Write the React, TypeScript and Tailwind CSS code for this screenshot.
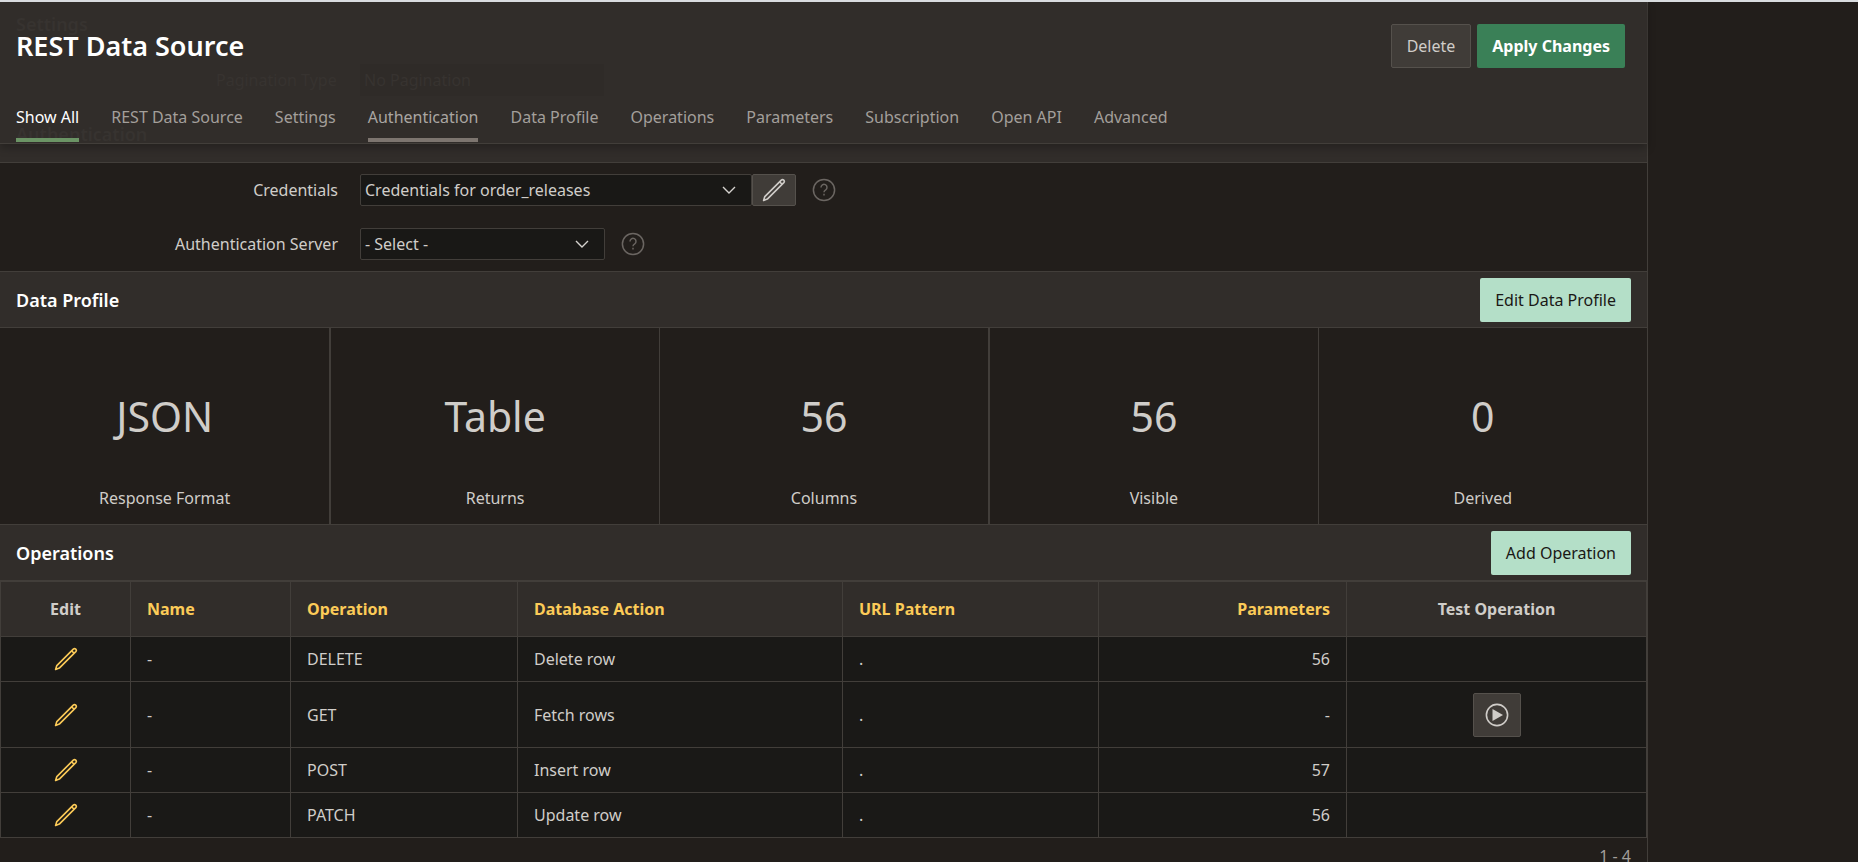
import React from "react";

const tabs = [
  "Show All",
  "REST Data Source",
  "Settings",
  "Authentication",
  "Data Profile",
  "Operations",
  "Parameters",
  "Subscription",
  "Open API",
  "Advanced",
];

const stats = [
  { value: "JSON", label: "Response Format" },
  { value: "Table", label: "Returns" },
  { value: "56", label: "Columns" },
  { value: "56", label: "Visible" },
  { value: "0", label: "Derived" },
];

const operations = [
  { operation: "DELETE", action: "Delete row", params: "56", test: false },
  { operation: "GET", action: "Fetch rows", params: "-", test: true },
  { operation: "POST", action: "Insert row", params: "57", test: false },
  { operation: "PATCH", action: "Update row", params: "56", test: false },
];

function Pencil() {
  return (
    <svg viewBox="0 0 24 24" className="size-6" fill="none" stroke="currentColor" strokeWidth="1.6" strokeLinejoin="round" aria-hidden="true">
      <path d="M1.6 22.4 2.8 18.6 19.3 2.1a1.77 1.77 0 0 1 2.5 2.5L5.3 21.1Z" />
      <path d="m17.6 3.8 2.5 2.5" />
    </svg>
  );
}

function Chevron() {
  return (
    <svg viewBox="0 0 14 8" className="pointer-events-none absolute top-1/2 right-4 h-2 w-3.5 -translate-y-1/2 text-[#d5d2ce]" fill="none" stroke="currentColor" strokeWidth="1.4" aria-hidden="true">
      <path d="m1 1 6 6 6-6" />
    </svg>
  );
}

function Help({ label }: { label: string }) {
  return (
    <button type="button" aria-label={label} className="ml-4 text-[#6b6662]">
      <svg viewBox="0 0 24 24" className="size-6" fill="none" stroke="currentColor" strokeWidth="1.5" aria-hidden="true">
        <circle cx="12" cy="12" r="10.6" />
        <path d="M9 9.4a3 3 0 1 1 4.7 2.4c-1.1.7-1.7 1.2-1.7 2.4" />
        <path d="M12 15.8v1.8" />
      </svg>
    </button>
  );
}

function SectionHeader({ title, action }: { title: string; action: string }) {
  return (
    <div className="flex h-14 items-center justify-between border-b border-[#423e3a] bg-[#312d2a] px-4">
      <h2 className="text-lg font-semibold text-white">{title}</h2>
      <button type="button" className="h-11 rounded-xs bg-[#b4dfc8] px-[15px] text-[#1a1816]">{action}</button>
    </div>
  );
}

export default function App() {
  return (
    <div className="flex h-screen overflow-hidden border-t-2 border-[#d9dcdf] bg-[#221e1b] font-['Noto_Sans',sans-serif] text-base leading-6 text-[#d0cdc9]">
      <main className="flex min-w-0 flex-1 flex-col border-r border-[#423e3a]">
        <header className="relative z-10 shrink-0 border-b border-[#423e3a] bg-[#312d2a] shadow-[0_4px_8px_rgba(0,0,0,0.25)]">
          <div aria-hidden="true" className="absolute inset-0 text-[#373330]">
            <span className="absolute top-3 left-4 text-lg leading-5 font-semibold">Settings</span>
            <span className="absolute top-16.5 left-54">Pagination Type</span>
            <span className="absolute top-15.5 left-90 h-8 w-61 bg-[#2f2b28] px-1 leading-8">No Pagination</span>
            <span className="absolute top-30.5 left-4 text-lg leading-5 font-semibold">Authentication</span>
          </div>
          <div className="relative flex items-start justify-between px-4 pt-5.5 pr-5.5">
            <h1 className="mt-2.5 text-[27px] leading-6 font-semibold text-white">REST Data Source</h1>
            <div className="flex gap-1.5">
              <button type="button" className="h-11 rounded-xs border border-[#55514c] bg-[#403c38] px-[15px]">Delete</button>
              <button type="button" className="h-11 rounded-xs bg-[#3a8057] px-[15px] font-bold text-white">Apply Changes</button>
            </div>
          </div>
          <nav className="relative mt-8.5 flex gap-8 px-4 pb-px">
            {tabs.map((t) => (
              <a
                key={t}
                href="#"
                className={
                  "h-10 border-b-4 pt-[3px] whitespace-nowrap " +
                  (t === "Show All"
                    ? "border-[#6b9465] text-white"
                    : t === "Authentication"
                      ? "border-[#7d756f] text-[#aaa6a2]"
                      : "border-transparent text-[#a39f9b]")
                }
              >
                {t}
              </a>
            ))}
          </nav>
        </header>

        <div className="box-content h-4.5 shrink-0 border-b border-[#423e3a] bg-[#312d2a]" />

        <form className="grid shrink-0 gap-5.5 border-b border-[#423e3a] py-[11px]">
          <div className="flex items-center">
            <label htmlFor="credentials" className="w-90 pr-5.5 text-right">Credentials</label>
            <div className="relative w-98">
              <select id="credentials" className="block h-8 w-full appearance-none rounded-xs border border-[#423e3a] bg-[#191816] px-1">
                <option>Credentials for order_releases</option>
              </select>
              <Chevron />
            </div>
            <button type="button" aria-label="Edit credentials" className="flex h-8 w-11 items-center justify-center rounded-xs border border-[#55514c] bg-[#403c38]">
              <Pencil />
            </button>
            <Help label="Help for credentials" />
          </div>
          <div className="flex items-center">
            <label htmlFor="server" className="w-90 pr-5.5 text-right">Authentication Server</label>
            <div className="relative w-[245px]">
              <select id="server" className="block h-8 w-full appearance-none rounded-xs border border-[#423e3a] bg-[#191816] px-1">
                <option>- Select -</option>
              </select>
              <Chevron />
            </div>
            <Help label="Help for authentication server" />
          </div>
        </form>

        <section className="shrink-0">
          <SectionHeader title="Data Profile" action="Edit Data Profile" />
          <dl className="grid grid-cols-5 border-b border-[#423e3a]">
            {stats.map((s) => (
              <div key={s.label} className="flex h-49 flex-col-reverse items-center justify-between border-l border-[#423e3a] pt-15 pb-3.5 first:border-l-0 even:border-l-2">
                <dt>{s.label}</dt>
                <dd className="text-[41px] leading-14">{s.value}</dd>
              </div>
            ))}
          </dl>
        </section>

        <section className="shrink-0">
          <SectionHeader title="Operations" action="Add Operation" />
          <table className="w-full table-fixed border-collapse bg-[#1a1917] [&_td]:border [&_td]:border-[#423e3a] [&_td]:px-4 [&_th]:border [&_th]:border-[#423e3a] [&_th]:px-4">
            <colgroup>
              <col className="w-[130px]" />
              <col className="w-[160px]" />
              <col className="w-[227px]" />
              <col className="w-[325px]" />
              <col className="w-[256px]" />
              <col className="w-[248px]" />
              <col />
            </colgroup>
            <thead>
              <tr className="h-[55px] bg-[#312d2a] text-left text-[#fccb58]">
                <th className="text-center text-[#d0cdc9]">Edit</th>
                <th>Name</th>
                <th>Operation</th>
                <th>Database Action</th>
                <th>URL Pattern</th>
                <th className="text-right">Parameters</th>
                <th className="text-center text-[#d0cdc9]">Test Operation</th>
              </tr>
            </thead>
            <tbody>
              {operations.map((o) => (
                <tr key={o.operation} className={o.test ? "h-[66px]" : "h-[45px]"}>
                  <td>
                    <a href="#" aria-label={"Edit " + o.operation} className="flex justify-center text-[#fccb58]">
                      <Pencil />
                    </a>
                  </td>
                  <td>-</td>
                  <td>{o.operation}</td>
                  <td>{o.action}</td>
                  <td>.</td>
                  <td className="text-right">{o.params}</td>
                  <td>
                    {o.test && (
                      <button type="button" aria-label="Test operation" className="mx-auto flex h-11 w-12 items-center justify-center rounded-xs border border-[#55514c] bg-[#403c38]">
                        <svg viewBox="0 0 24 24" className="size-6" fill="none" stroke="currentColor" strokeWidth="1.6" aria-hidden="true">
                          <circle cx="12" cy="12" r="10.6" />
                          <path d="m7.5 6 10.5 6-10.5 6Z" fill="currentColor" stroke="none" />
                        </svg>
                      </button>
                    )}
                  </td>
                </tr>
              ))}
            </tbody>
          </table>
          <p className="px-4 pt-1.5 text-right text-[#a39f9b]">1 - 4</p>
        </section>
      </main>
      <aside className="w-[210px] shrink-0" />
    </div>
  );
}
